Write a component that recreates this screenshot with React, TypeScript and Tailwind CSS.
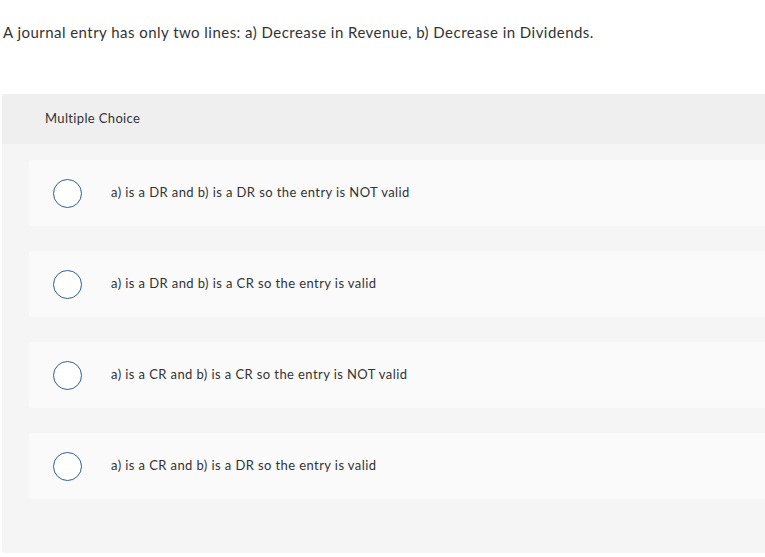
const options = [
  'a) is a DR and b) is a DR so the entry is NOT valid',
  'a) is a DR and b) is a CR so the entry is valid',
  'a) is a CR and b) is a CR so the entry is NOT valid',
  'a) is a CR and b) is a DR so the entry is valid',
]

export default function App() {
  return (
    <div className="w-[765px] h-[557px] bg-white overflow-hidden font-['Lato',sans-serif] text-[#333]">
      <p className="pl-[3px] pt-[22px] text-[15px] leading-5 tracking-[0.46px] text-[#333]">
        A journal entry has only two lines: a) Decrease in Revenue, b) Decrease in Dividends.
      </p>
      <div className="mt-[52px] ml-[2px] h-[459px] bg-[#f5f5f5] rounded-bl-[3px]">
        <div className="h-[50px] bg-[#efefef] flex items-center pl-[43px] text-[13px] tracking-[0.35px] text-[#333]">
          Multiple Choice
        </div>
        <div className="pl-[27px] pt-4 flex flex-col gap-[25px]">
          {options.map((text) => (
            <div
              key={text}
              className="h-[66px] bg-[#fafafa] rounded-l-[3px] flex items-center pl-[24px]"
            >
              <span className="w-[29px] h-[29px] rounded-full border-[1.5px] border-[#2d5f98] bg-white shrink-0" />
              <span className="ml-[29px] text-[13px] tracking-[0.41px] text-[#333]">{text}</span>
            </div>
          ))}
        </div>
      </div>
    </div>
  )
}
